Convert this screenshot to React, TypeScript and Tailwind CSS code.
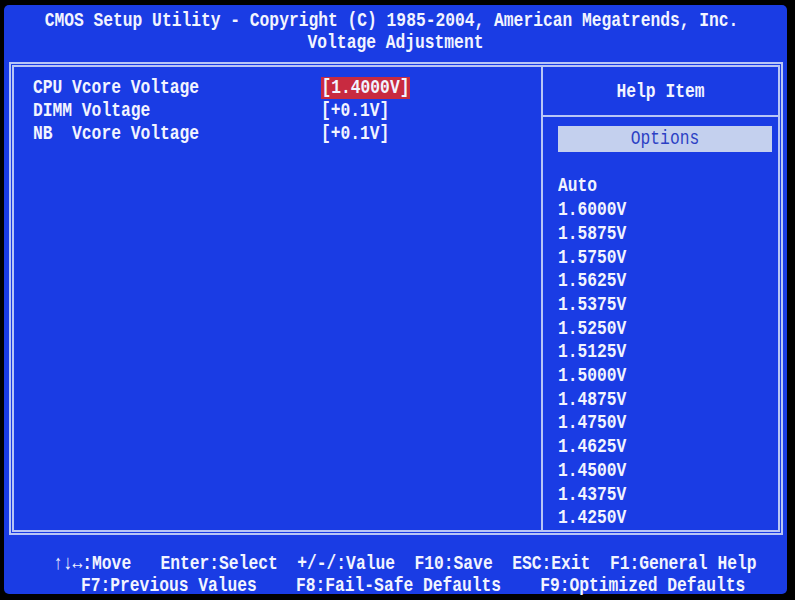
import React from "react";

function T({ children, className = "" }: { children: React.ReactNode; className?: string }) {
  return <span className={"inline-block scale-y-125 " + className}>{children}</span>;
}

const rows = [
  { label: "CPU Vcore Voltage", value: "[1.4000V]", active: true },
  { label: "DIMM Voltage", value: "[+0.1V]", active: false },
  { label: "NB  Vcore Voltage", value: "[+0.1V]", active: false },
];

const options = [
  "Auto",
  "1.6000V",
  "1.5875V",
  "1.5750V",
  "1.5625V",
  "1.5375V",
  "1.5250V",
  "1.5125V",
  "1.5000V",
  "1.4875V",
  "1.4750V",
  "1.4625V",
  "1.4500V",
  "1.4375V",
  "1.4250V",
];

export default function App() {
  return (
    <div className="w-[795px] h-[600px] bg-black pt-[5px] pl-[4px] pr-[8px] pb-[6px] font-['Liberation_Mono','DejaVu_Sans_Mono',monospace] font-bold text-[16.3px] text-[#f2f4ff] overflow-hidden">
      <div className="h-full bg-[#1a3ce4] rounded-[5px] flex flex-col whitespace-pre">
        <div className="pt-[5px] flex flex-col items-center leading-[22px]">
          <div className="-translate-x-[4px]">
            <T>CMOS Setup Utility - Copyright (C) 1985-2004, American Megatrends, Inc.</T>
          </div>
          <div>
            <T>Voltage Adjustment</T>
          </div>
        </div>

        <div className="mt-[8px] ml-[5px] mr-[4px] h-[473px] border-[5px] border-double border-[#b8c6f6] flex">
          <div className="w-[527px] pt-[9px] pl-[19px] flex flex-col leading-[23px]">
            {rows.map((r) => (
              <div key={r.label} className="flex h-[23px] items-center">
                <div className="w-[288px]">
                  <T>{r.label}</T>
                </div>
                {r.active ? (
                  <span className="inline-block bg-[#c82a40] leading-[22px] px-[0.5px]">
                    <T>{r.value}</T>
                  </span>
                ) : (
                  <span className="inline-block">
                    <T>{r.value}</T>
                  </span>
                )}
              </div>
            ))}
          </div>
          <div className="flex-1 border-l-[2px] border-[#b8c6f6] flex flex-col">
            <div className="h-[50px] border-b-[2px] border-[#b8c6f6] flex items-center justify-center pt-[2px]">
              <T>Help Item</T>
            </div>
            <div className="mt-[9px] ml-[15px] mr-[6px] h-[27px] bg-[#c4d0ee] text-[#2b3fc4] font-normal flex items-center justify-center">
              <T>Options</T>
            </div>
            <div className="mt-[22px] pl-[15px] flex flex-col leading-[23.7px]">
              {options.map((o) => (
                <div key={o}>
                  <T>{o}</T>
                </div>
              ))}
            </div>
          </div>
        </div>

        <div className="mt-[18px] flex flex-col leading-[22px]">
          <div className="pl-[49px]">
            <T>{"↑↓↔:Move   Enter:Select  +/-/:Value  F10:Save  ESC:Exit  F1:General Help"}</T>
          </div>
          <div className="pl-[77px]">
            <T>{"F7:Previous Values    F8:Fail-Safe Defaults    F9:Optimized Defaults"}</T>
          </div>
        </div>
      </div>
    </div>
  );
}
